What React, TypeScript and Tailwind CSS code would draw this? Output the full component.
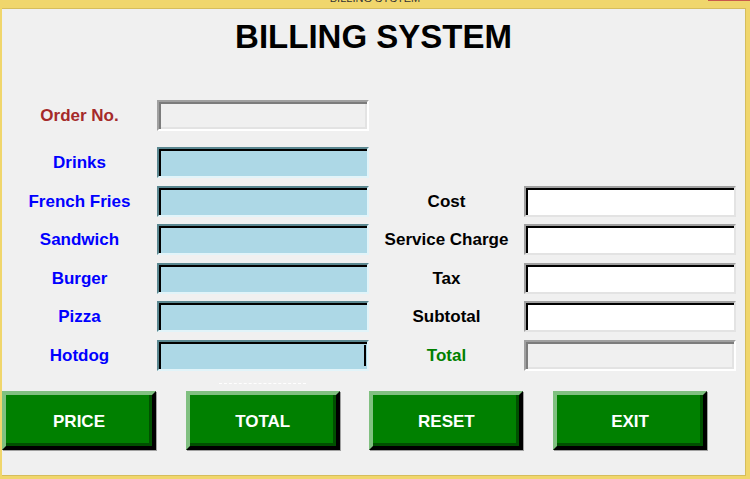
import React from 'react';

type EntryKind = 'blue' | 'white' | 'gray';

const entryStyles: Record<EntryKind, string> = {
  blue: 'bg-[#add8e6] border-t-[#5a8790] border-l-[#5a8790] border-b-[#e2f4f9] border-r-[#e2f4f9] shadow-[inset_2px_2px_0_#000]',
  white: 'bg-white border-t-[#a0a0a0] border-l-[#a0a0a0] border-b-[#e3e3e3] border-r-[#e3e3e3] shadow-[inset_2px_2px_0_#000]',
  gray: 'bg-[#f0f0f0] border-t-[#a0a0a0] border-l-[#a0a0a0] border-b-white border-r-white shadow-[inset_2px_2px_0_#7c7c7c,inset_-2px_-2px_0_#e3e3e3]',
};

function Entry({ kind, cursor }: { kind: EntryKind; cursor?: boolean }) {
  return (
    <div className={`h-[31px] w-[212px] border-2 flex items-center justify-end ${entryStyles[kind]}`}>
      {cursor && <div className="w-[2px] h-[21px] bg-black mr-[1px]" />}
    </div>
  );
}

function Label({ text, color }: { text: string; color: string }) {
  return (
    <div className={`flex items-center justify-center text-[17px] font-bold leading-none ${color}`}>
      {text}
    </div>
  );
}

const items = [
  { left: 'French Fries', right: 'Cost', rightColor: 'text-black', kind: 'white' as EntryKind },
  { left: 'Sandwich', right: 'Service Charge', rightColor: 'text-black', kind: 'white' as EntryKind },
  { left: 'Burger', right: 'Tax', rightColor: 'text-black', kind: 'white' as EntryKind },
  { left: 'Pizza', right: 'Subtotal', rightColor: 'text-black', kind: 'white' as EntryKind },
  { left: 'Hotdog', right: 'Total', rightColor: 'text-[#008000]', kind: 'gray' as EntryKind },
];

function GreenButton({ label }: { label: string }) {
  return (
    <button className="h-[59px] w-[154px] bg-[#008000] border-4 border-t-[#80c080] border-l-[#80c080] border-b-black border-r-black shadow-[inset_-3px_-3px_0_#005000,1px_1px_0_#a0a0a0] text-white text-[17px] font-bold leading-none flex items-center justify-center pt-[3px]">
      {label}
    </button>
  );
}

export default function App() {
  return (
    <div className="h-[479px] w-full bg-[#f0d66c] flex flex-col font-['Liberation_Sans',Arial,sans-serif] overflow-hidden">
      <div className="relative h-[8px] overflow-hidden flex justify-center">
        <span className="text-[11px] leading-none text-[#333] -mt-[7px]">BILLING SYSTEM</span>
        <div className="absolute right-0 top-0 w-[42px] h-[1px] bg-[#c95a4c]" />
      </div>
      <div className="flex-1 flex pl-[2px] pr-[4px] pb-[3px]">
        <div className="flex-1 bg-[#f0f0f0] border-t border-r border-b border-[#d6bd5c] flex flex-col">
          <h1 className="mt-[11px] text-center text-[33px] leading-[33px] font-bold text-black">BILLING SYSTEM</h1>

          <div className="mt-[47px] grid grid-cols-[155px_212px]">
            <Label text="Order No." color="text-[#a52a2a]" />
            <Entry kind="gray" />
          </div>

          <div className="mt-[16px] flex flex-col gap-[7.5px]">
            <div className="grid grid-cols-[155px_212px]">
              <Label text="Drinks" color="text-[#0000ff]" />
              <Entry kind="blue" />
            </div>
            {items.map((it) => (
              <div key={it.left} className="grid grid-cols-[155px_212px_155px_212px]">
                <Label text={it.left} color="text-[#0000ff]" />
                <Entry kind="blue" cursor={it.left === 'Hotdog'} />
                <Label text={it.right} color={it.rightColor} />
                <Entry kind={it.kind} />
              </div>
            ))}
          </div>

          <div className="mt-[12px] ml-[217px] w-[87px] border-t border-dashed border-white" />

          <div className="mt-[7px] flex gap-[29.7px]">
            <GreenButton label="PRICE" />
            <GreenButton label="TOTAL" />
            <GreenButton label="RESET" />
            <GreenButton label="EXIT" />
          </div>
        </div>
      </div>
    </div>
  );
}
